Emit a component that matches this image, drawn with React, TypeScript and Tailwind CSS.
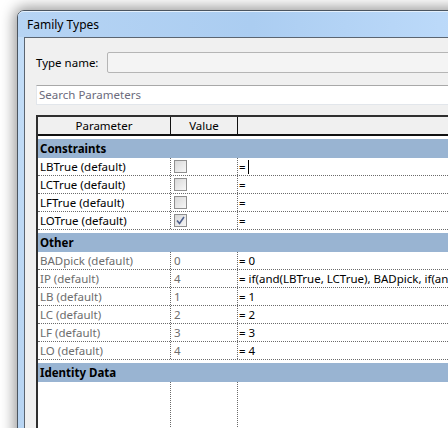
import React from "react";

type Row = { name: string; value?: string; formula: string; check?: boolean; locked?: boolean };

const groups: { title: string; rows: Row[] }[] = [
  {
    title: "Constraints",
    rows: [
      { name: "LBTrue (default)", check: false, formula: "=" },
      { name: "LCTrue (default)", check: false, formula: "=" },
      { name: "LFTrue (default)", check: false, formula: "=" },
      { name: "LOTrue (default)", check: true, formula: "=" },
    ],
  },
  {
    title: "Other",
    rows: [
      { name: "BADpick (default)", value: "0", formula: "= 0", locked: true },
      { name: "IP (default)", value: "4", formula: "= if(and(LBTrue, LCTrue), BADpick, if(and(LBTrue, LFTrue), 2, 3))", locked: true },
      { name: "LB (default)", value: "1", formula: "= 1", locked: true },
      { name: "LC (default)", value: "2", formula: "= 2", locked: true },
      { name: "LF (default)", value: "3", formula: "= 3", locked: true },
      { name: "LO (default)", value: "4", formula: "= 4", locked: true },
    ],
  },
  { title: "Identity Data", rows: [] },
];

function CheckBox({ checked }: { checked: boolean }) {
  return (
    <div className="w-[13px] h-[13px] border border-[#8f8f8f] bg-gradient-to-br from-[#d9d9d9] to-[#f7f7f7] flex items-center justify-center">
      {checked && (
        <svg width="9" height="9" viewBox="0 0 9 9">
          <path d="M1 4.5 L3.5 7.5 L8 1" fill="none" stroke="#4d5f8c" strokeWidth="1.6" />
        </svg>
      )}
    </div>
  );
}

export default function App() {
  return (
    <div className="relative w-[448px] h-[428px] overflow-hidden bg-white font-['Noto_Sans',sans-serif] text-[11.5px] text-black">
      <div className="ml-[17px] mt-[10px] w-[470px] h-[440px] rounded-tl-[7px] border border-[#4b5560] bg-gradient-to-b from-[#c4def8] to-[#b7d4f2] shadow-[0_0_14px_3px_rgba(0,0,0,0.4)] flex flex-col">
        {/* title bar */}
        <div className="h-[26px] pl-[9px] flex items-center text-[12px] bg-gradient-to-r from-[#b6d4f4] via-[#abcdf1] to-[#bfdcfb] rounded-tl-[6px] border-t border-[#e4f0fc]">
          Family Types
        </div>

        {/* content */}
        <div className="ml-[6px] flex-1 border-l border-t border-[#5b6571] bg-[#f0f0f0] pl-[11px] pt-[14px] flex flex-col">
          <div className="flex items-center h-[21px]">
            <div className="w-[71px]">Type name:</div>
            <div className="flex-1 h-[21px] rounded-[2px] border border-[#b5b5b5] bg-[#f4f4f4]" />
          </div>

          <div className="mt-[12px] h-[20px] bg-white border-t border-[#a8a8a8] border-l border-l-[#e2e6eb] border-b border-b-[#e2e6eb] pl-[2px] flex items-center text-[#6b6b7c]">
            Search Parameters
          </div>

          {/* table */}
          <div className="mt-[10px] flex-1 flex flex-col border-t-2 border-l-2 border-[#2f2f2f] bg-white">
            <div className="h-[19px] flex bg-[#f0f0f0] border-b-2 border-[#111]">
              <div className="w-[133px] border-r border-[#111] flex items-center justify-center">Parameter</div>
              <div className="w-[67px] border-r border-[#111] flex items-center justify-center">Value</div>
              <div className="flex-1" />
            </div>

            {groups.map((g) => (
              <div key={g.title}>
                <div className="h-[22px] pt-[3px]">
                  <div className="h-[19px] bg-[#99b4d2] pl-[2px] flex items-center font-bold">{g.title}</div>
                </div>
                {g.rows.map((r, i) => (
                  <div key={r.name} className="h-[18px] flex border-b border-dotted border-[#6a6a6a]">
                    <div className={`w-[133px] pl-[2px] border-r border-dotted border-[#6a6a6a] flex items-center whitespace-nowrap ${r.locked ? "text-[#6d6d6d]" : "text-black"}`}>
                      {r.name}
                    </div>
                    <div className="w-[67px] pl-[3px] border-r border-dotted border-[#6a6a6a] flex items-center text-[#6d6d6d]">
                      {r.check !== undefined ? <CheckBox checked={r.check} /> : r.value}
                    </div>
                    <div className="flex-1 pl-[1px] flex items-center whitespace-nowrap overflow-hidden">
                      {r.formula}
                      {g.title === "Constraints" && i === 0 && (
                        <span className="inline-block w-px h-[14px] bg-black ml-[2px]" />
                      )}
                    </div>
                  </div>
                ))}
              </div>
            ))}

            <div className="flex-1 flex">
              <div className="w-[133px] border-r border-dotted border-[#6a6a6a]" />
              <div className="w-[67px] border-r border-dotted border-[#6a6a6a]" />
              <div className="flex-1" />
            </div>
          </div>
        </div>
      </div>
    </div>
  );
}
